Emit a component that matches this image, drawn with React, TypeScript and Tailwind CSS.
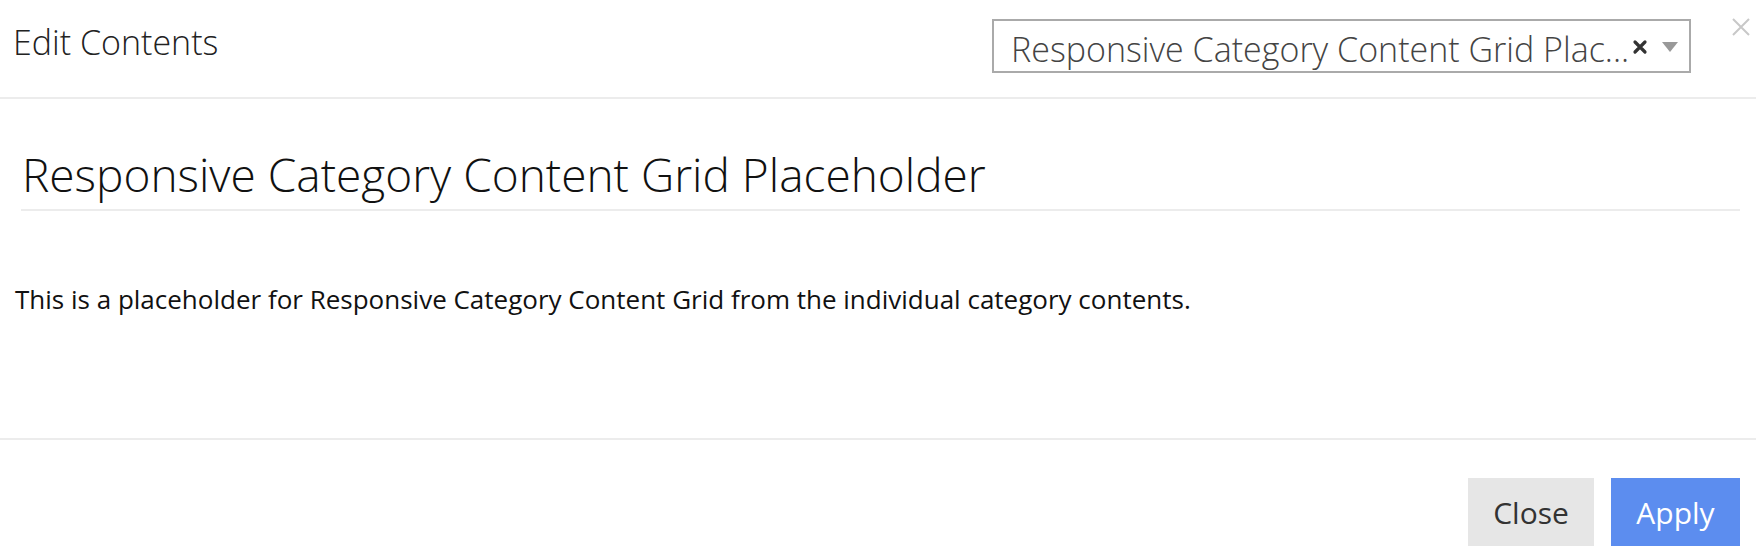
export default function App() {
  return (
    <div className="w-[1756px] h-[552px] bg-white overflow-hidden font-['Open_Sans',sans-serif] text-[#111]">
      {/* Header */}
      <div className="flex items-start h-[99px] border-b-2 border-[#ececec] pl-[13px] pr-[6px]">
        <h2 className="mt-[19px] text-[34px] leading-[46px] font-light text-[#222]">Edit Contents</h2>
        <div className="ml-auto mt-[19px] w-[699px] h-[54px] border-2 border-[#aaaaaa] flex items-center pt-[5px] pl-[17px] pr-[11px]">
          <span className="flex-1 min-w-0 whitespace-nowrap overflow-hidden text-[34px] leading-[46px] font-light text-[#444]">
            Responsive Category Content Grid Plac...
          </span>
          <svg width="16" height="16" viewBox="0 0 16 16" className="-mt-[3px]">
            <path d="M3 3 L13 13 M13 3 L3 13" stroke="#333" strokeWidth="3.2" strokeLinecap="round" />
          </svg>
          <svg width="16" height="10" viewBox="0 0 16 10" className="ml-[14px] -mt-[4px]">
            <path d="M0 0 H16 L8 10 Z" fill="#999" />
          </svg>
        </div>
        <button className="ml-[41px] mt-[18px]">
          <svg width="18" height="18" viewBox="0 0 18 18">
            <path d="M1 1 L17 17 M17 1 L1 17" stroke="#c8c8c8" strokeWidth="2" />
          </svg>
        </button>
      </div>

      {/* Body */}
      <div className="h-[341px] pt-[44px] border-b-2 border-[#ececec]">
        <div className="ml-[21px] mr-[16px] pb-[4px] border-b-2 border-[#ececec]">
          <h1 className="pl-[1px] text-[46px] leading-[62px] font-light text-[#111]">
            Responsive Category Content Grid Placeholder
          </h1>
        </div>
        <p className="mt-[70px] pl-[15px] text-[26px] leading-[36px] text-[#111]">
          This is a placeholder for Responsive Category Content Grid from the individual category contents.
        </p>
      </div>

      {/* Footer */}
      <div className="flex justify-end gap-[17px] pt-[38px] pr-[16px]">
        <button className="w-[126px] h-[68px] bg-[#e6e6e6] text-[30px] text-[#333]">Close</button>
        <button className="w-[129px] h-[68px] bg-[#5c8def] text-[30px] text-white">Apply</button>
      </div>
    </div>
  );
}
